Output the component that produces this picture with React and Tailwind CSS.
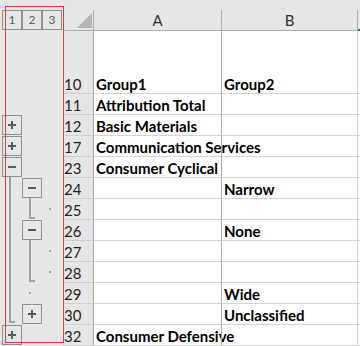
import React from 'react';

const LINE = 'bg-[#a0a0a0]';

const rows = [
  { n: '10', a: 'Group1', b: 'Group2', tall: true },
  { n: '11', a: 'Attribution Total' },
  { n: '12', a: 'Basic Materials', l1: 'plus' },
  { n: '17', a: 'Communication Services', l1: 'plus' },
  { n: '23', a: 'Consumer Cyclical', l1: 'minus' },
  { n: '24', b: 'Narrow', l1: 'line', l2: 'minus' },
  { n: '25', l1: 'line', l2: 'end', l3: 'dot' },
  { n: '26', b: 'None', l1: 'line', l2: 'minus' },
  { n: '27', l1: 'line', l2: 'line', l3: 'dot' },
  { n: '28', l1: 'line', l2: 'end', l3: 'dot' },
  { n: '29', b: 'Wide', l1: 'line', l2: 'dot' },
  { n: '30', b: 'Unclassified', l1: 'end', l2: 'plus' },
  { n: '32', a: 'Consumer Defensive', l1: 'plus' },
];

const OutlineBox = ({ sign }) => (
  <div className="w-[20px] h-[20px] shrink-0 border border-[#8d9097] flex items-center justify-center">
    <svg width="10" height="10" viewBox="0 0 10 10">
      <rect x="1" y="4" width="8" height="2" fill="#5a5a5a" />
      {sign === 'plus' && <rect x="4" y="1" width="2" height="8" fill="#5a5a5a" />}
    </svg>
  </div>
);

const Level1 = ({ kind }) => {
  switch (kind) {
    case 'plus': return <div className="ml-[2px]"><OutlineBox sign="plus" /></div>;
    case 'minus': return (
      <div className="ml-[2px] flex flex-col">
        <OutlineBox sign="minus" />
        <div className={`ml-[7px] w-[2px] h-[1px] ${LINE}`} />
      </div>
    );
    case 'line': return <div className={`ml-[9px] w-[2px] h-full ${LINE}`} />;
    case 'end': return (
      <div className="ml-[9px] flex flex-col">
        <div className={`w-[2px] h-[17px] ${LINE}`} />
        <div className={`w-[6px] h-[2px] ${LINE}`} />
      </div>
    );
    default: return null;
  }
};

const Level2 = ({ kind }) => {
  switch (kind) {
    case 'plus': return <OutlineBox sign="plus" />;
    case 'minus': return (
      <div className="flex flex-col">
        <OutlineBox sign="minus" />
        <div className={`ml-[7px] w-[2px] h-[1px] ${LINE}`} />
      </div>
    );
    case 'line': return <div className={`ml-[7px] w-[2px] h-full ${LINE}`} />;
    case 'end': return (
      <div className="ml-[7px] flex flex-col">
        <div className={`w-[2px] h-[18px] ${LINE}`} />
        <div className={`w-[6px] h-[2px] ${LINE}`} />
      </div>
    );
    case 'dot': return <div className={`ml-[7px] mt-[9px] w-[2px] h-[2px] ${LINE}`} />;
    default: return null;
  }
};

const Row = ({ row }) => (
  <div className={`flex ${row.tall ? 'h-[63px]' : 'h-[21px]'}`}>
    {/* outline gutter */}
    <div className="w-[63px] flex shrink-0">
      <div className="w-[22px] flex shrink-0"><Level1 kind={row.l1} /></div>
      <div className="w-[21px] flex shrink-0"><Level2 kind={row.l2} /></div>
      <div className="w-[20px] flex shrink-0">
        {row.l3 === 'dot' && <div className={`ml-[6px] mt-[9px] w-[2px] h-[2px] ${LINE}`} />}
      </div>
    </div>
    {/* row number */}
    <div className="w-[31px] shrink-0 border-r border-r-[#ababab] border-b border-b-[#cfcfcf] flex items-end pl-[1px] text-[15px] leading-[18px] text-[#1f1f1f]">
      {row.n}
    </div>
    {/* cells */}
    <div className="flex-1 flex bg-white font-bold text-[15px] leading-[18px] text-black">
      <div className="w-[127px] shrink-0 border-b border-[#d4d4d4] flex items-end pl-[2px] whitespace-nowrap">
        {row.a}
      </div>
      <div className="w-[137px] shrink-0 border-l border-l-[#ababab] border-r border-r-[#d4d4d4] border-b border-b-[#d4d4d4] flex items-end pl-[2px] whitespace-nowrap">
        {row.b}
      </div>
      <div className="flex-1 border-b border-[#d4d4d4]" />
    </div>
  </div>
);

export default function App() {
  return (
    <div className="relative w-[360px] h-[346px] overflow-hidden bg-[#e6e6e6] font-['Lato',sans-serif]">
      <div className="h-[10px]" />

      {/* column header */}
      <div className="flex h-[21px]">
        <div className="w-[63px] shrink-0 flex pl-[2px]">
          {['1', '2', '3'].map((n) => (
            <div key={n} className="w-[20px] h-[20px] border border-[#8d9097] flex items-center justify-center text-[12px] text-[#606060]">
              {n}
            </div>
          ))}
        </div>
        <div className="w-[31px] shrink-0 border-r border-b border-[#ababab] flex items-end justify-end pr-[1px] pb-[2px]">
          <svg width="15" height="15" viewBox="0 0 15 15">
            <polygon points="15,0 15,15 0,15" fill="#b4b4b4" />
          </svg>
        </div>
        <div className="w-[127px] shrink-0 border-b border-[#ababab] flex items-center justify-center text-[15px] text-[#333]">
          A
        </div>
        <div className="w-[137px] shrink-0 border-l border-r border-b border-[#ababab] flex items-center justify-center text-[15px] text-[#333]">
          B
        </div>
        <div className="flex-1 border-b-2 border-[#217346]" />
      </div>

      {rows.map((row) => <Row key={row.n} row={row} />)}

      {/* selection outline over the gutter */}
      <div className="absolute left-[5px] top-[6px] w-[59px] h-[337px] border border-[#e53935] pointer-events-none" />
    </div>
  );
}
